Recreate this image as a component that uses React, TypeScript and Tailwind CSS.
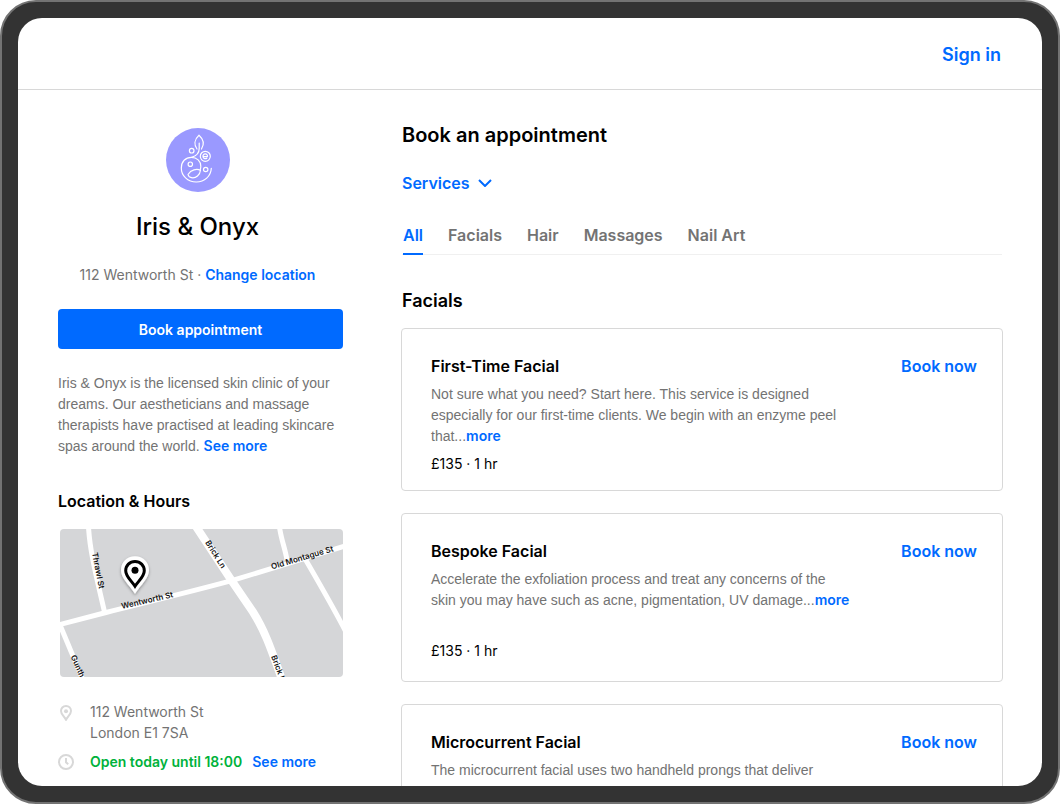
import React, { FC, useState } from "react";

type Service = {
  name: string;
  description: string;
  more?: boolean;
  price: string;
  compact?: boolean;
};

const services: Service[] = [
  {
    name: "First-Time Facial",
    description:
      "Not sure what you need? Start here. This service is designed especially for our first-time clients. We begin with an enzyme peel that...",
    more: true,
    price: "£135 · 1 hr",
    compact: true,
  },
  {
    name: "Bespoke Facial",
    description:
      "Accelerate the exfoliation process and treat any concerns of the skin you may have such as acne, pigmentation, UV damage...",
    more: true,
    price: "£135 · 1 hr",
  },
  {
    name: "Microcurrent Facial",
    description: "The microcurrent facial uses two handheld prongs that deliver",
    price: "£135 · 1 hr",
  },
];

const tabs = ["All", "Facials", "Hair", "Massages", "Nail Art"];

const Logo: FC = () => (
  <svg viewBox="0 0 64 64" className="size-16" fill="none" aria-hidden="true">
    <circle cx="32" cy="32" r="32" fill="#9a99ff" />
    <g stroke="#fff" strokeWidth="1.2" strokeLinecap="round" strokeLinejoin="round">
      {/* Leaf and stem */}
      <path d="M31 21c-3-4-3-9.300 2-13.800 5 4.500 5 9.800 2.500 13.800" />
      <path d="M33.200 15v5.500c0 4.500-2.800 7.500-7.600 8.800" />
      {/* Body */}
      <path d="M45.300 40.300c-.4 8-6.800 13.700-15 13.700-8.600 0-15-6.300-15-14.100 0-6.200 4.200-10.600 10-10.600 5.700 0 9.500 4 9.500 9 0 1.400-.2 2.600-.6 3.800" />
      {/* Lower leaf */}
      <path d="M22 46.500c3-5 8.700-6 12.500-4.300-.5 4.800-4.500 8.300-9 7.500-2-.4-3.200-1.700-3.500-3.200z" />
      <circle cx="25.700" cy="22.700" r="2.300" />
      <circle cx="24.300" cy="36.200" r="2.200" />
      <circle cx="39.700" cy="41.500" r="2.200" />
      <circle cx="39.300" cy="28.300" r="5" />
      <path d="M37.600 28.600h3.800c.3-1.700-.8-2.700-2.100-2.700a2.400 2.400 0 1 0 1.500 4.300" />
    </g>
  </svg>
);

const LocationMap: FC = () => (
  <svg
    viewBox="0 0 283 148"
    className="block w-full rounded"
    role="img"
    aria-label="Map of Wentworth St"
  >
    <defs>
      <filter id="pinShadow" x="-30%" y="-30%" width="160%" height="160%">
        <feDropShadow dx="0" dy="1.500" stdDeviation="1.500" floodOpacity="0.35" />
      </filter>
    </defs>
    <rect width="283" height="148" fill="#d5d6d8" />
    {/* Roads */}
    <g fill="none" stroke="#fff" strokeWidth="5">
      <path d="M28.500 -2C30 24 37 50 44.500 83" />
      <path d="M-2 96L46 83.500C88 73 130 63 171.700 51.700L285 17" />
      <path d="M0 96L23 151" />
      <path d="M219.500 -2C221 10 225 19 227 31" />
      <path d="M244 28C258 52 272 76 286 103" />
      <path d="M135 -4L171.700 51.700L193 83C205 102 211 120 222.500 152" strokeWidth="8" />
    </g>
    {/* Street names */}
    <g fill="#111" fontFamily="Inter, sans-serif" fontSize="8" fontWeight="600">
      <text transform="translate(32 24) rotate(79)">Thrawl St</text>
      <text transform="translate(62 80) rotate(-13)">Wentworth St</text>
      <text transform="translate(212 40.500) rotate(-16.500)">Old Montague St</text>
      <text transform="translate(145 13.500) rotate(58)">Brick Ln</text>
      <text transform="translate(211 127.500) rotate(69)">Brick Ln</text>
      <text transform="translate(10.500 127.500) rotate(66)">Gunthorpe St</text>
    </g>
    {/* Pin */}
    <path
      d="M75 27.300c-8 0-14 6-14 13.700 0 8.500 8 14.500 14 23.700 6-9.200 14-15.200 14-23.700 0-7.700-6-13.700-14-13.700z"
      fill="#fff"
      filter="url(#pinShadow)"
    />
    <path
      d="M75 32.500c-5.300 0-9.300 4-9.300 9.200 0 5.700 5.300 9.500 9.300 15.500 4-6 9.300-9.800 9.300-15.500 0-5.200-4-9.200-9.300-9.200z"
      fill="#fff"
      stroke="#000"
      strokeWidth="3"
    />
    <circle cx="75" cy="41.300" r="3.500" />
  </svg>
);

const PinIcon: FC = () => (
  <svg viewBox="0 0 16 16" className="mt-1 size-4 shrink-0" fill="none" aria-hidden="true">
    <path
      d="M8 1C4.900 1 3 3.300 3 6c0 3.200 3 5 5 8.700C10 11 13 9.200 13 6c0-2.700-1.900-5-5-5z"
      stroke="#d8d8d8"
      strokeWidth="2"
    />
    <circle cx="8" cy="6.200" r="2" fill="#d8d8d8" />
  </svg>
);

const ClockIcon: FC = () => (
  <svg viewBox="0 0 16 16" className="size-4 shrink-0" fill="none" aria-hidden="true">
    <circle cx="8" cy="8" r="7" stroke="#d8d8d8" strokeWidth="2" />
    <path d="M8 4v4.300l2.200 2" stroke="#d8d8d8" strokeWidth="2" />
  </svg>
);

const Chevron: FC = () => (
  <svg
    viewBox="0 0 14 8"
    className="pointer-events-none absolute right-0 h-2 w-3.5"
    fill="none"
    aria-hidden="true"
  >
    <path d="M1 1l6 6 6-6" stroke="#006aff" strokeWidth="2" />
  </svg>
);

const Sidebar: FC = () => (
  <aside className="w-[285px] shrink-0">
    <div className="flex flex-col items-center pr-1.5">
      <Logo />
      <h1 className="mt-4 text-2xl leading-[38px] font-medium">Iris &amp; Onyx</h1>
      <p className="mt-[18px] text-[#737373]">
        112 Wentworth St ·{" "}
        <a href="#location" className="font-semibold text-[#006aff]">
          Change location
        </a>
      </p>
    </div>
    <button className="mt-6 h-10 w-full rounded bg-[#006aff] font-semibold text-white">
      Book appointment
    </button>
    <p className="mt-6 font-['Liberation_Sans',sans-serif] text-[#737373]">
      Iris &amp; Onyx is the licensed skin clinic of your dreams. Our aestheticians and massage
      therapists have practised at leading skincare spas around the world.{" "}
      <a
        href="#about"
        className="font-['Inter',sans-serif] leading-none font-semibold text-[#006aff]"
      >
        See more
      </a>
    </p>
    <h2 className="mt-8 text-base leading-6 font-semibold">Location &amp; Hours</h2>
    <div className="mt-4 pl-0.5">
      <LocationMap />
    </div>
    <div className="mt-6 flex gap-4 text-[#737373]">
      <PinIcon />
      <p>
        112 Wentworth St
        <br />
        London E1 7SA
      </p>
    </div>
    <div className="mt-2 flex items-center gap-4 font-semibold">
      <ClockIcon />
      <p className="flex gap-2.5 whitespace-nowrap">
        <span className="text-[#00b23b]">Open today until 18:00</span>
        <a href="#hours" className="text-[#006aff]">
          See more
        </a>
      </p>
    </div>
  </aside>
);

type CardProps = { service: Service };
const ServiceCard: FC<CardProps> = ({ service }) => (
  <article
    className={`rounded border border-[#d8d8d8] pt-[25px] pr-[25px] pl-[29px] ${service.compact ? "pb-4" : "pb-5"}`}
  >
    <div className="flex items-center justify-between text-base leading-6 font-semibold">
      <h3>{service.name}</h3>
      <button className="text-[#006aff]">Book now</button>
    </div>
    <p
      className={`mt-1.5 max-w-[420px] font-['Liberation_Sans',sans-serif] text-[#737373] ${service.compact ? "" : "min-h-[65px]"}`}
    >
      {service.description}
      {service.more && (
        <a
          href="#more"
          className="font-['Inter',sans-serif] leading-none font-semibold text-[#006aff]"
        >
          more
        </a>
      )}
    </p>
    <p className="mt-1.5">{service.price}</p>
  </article>
);

const Booking: FC = () => {
  const [active, setActive] = useState("All");
  return (
    <main className="min-w-0 flex-1">
      <div className="px-px">
        <h2 className="-mt-[5px] text-xl leading-6 font-semibold">Book an appointment</h2>
        <div className="relative mt-6 inline-flex items-center text-[#006aff]">
          <select
            aria-label="Category"
            className="appearance-none bg-transparent pr-[22px] text-base leading-6 font-semibold"
          >
            <option>Services</option>
          </select>
          <Chevron />
        </div>
        <div
          role="tablist"
          className="mt-7 flex gap-[25px] border-b border-[#f0f0f0] pl-px text-base leading-6 font-semibold"
        >
          {tabs.map((tab) => (
            <button
              key={tab}
              role="tab"
              aria-selected={tab === active}
              onClick={() => setActive(tab)}
              className={
                tab === active
                  ? "-mb-px border-b-2 border-[#006aff] pb-1.5 text-[#006aff]"
                  : "-mb-px border-b-2 border-transparent pb-1.5 text-[#737373]"
              }
            >
              {tab}
            </button>
          ))}
        </div>
        <h2 className="mt-8 text-lg leading-7 font-semibold">Facials</h2>
      </div>
      <div className="mt-[13px] flex flex-col gap-[22px]">
        {services.map((service) => (
          <ServiceCard key={service.name} service={service} />
        ))}
      </div>
    </main>
  );
};

const App: FC = () => (
  <div className="h-screen rounded-[36px] border-2 border-[#737373] bg-[#333] p-4 font-['Inter',sans-serif] text-sm leading-[21px] text-black">
    <div className="flex h-full flex-col overflow-hidden rounded-3xl bg-white">
      <header className="flex h-[72px] shrink-0 items-center justify-end border-b border-[#d8d8d8] pt-0.5 pr-[41px] pl-10">
        <a href="#signin" className="text-lg font-semibold text-[#006aff]">
          Sign in
        </a>
      </header>
      <div className="flex min-h-0 flex-1 gap-[58px] pt-[38px] pr-[39px] pl-10">
        <Sidebar />
        <Booking />
      </div>
    </div>
  </div>
);

export default App;
